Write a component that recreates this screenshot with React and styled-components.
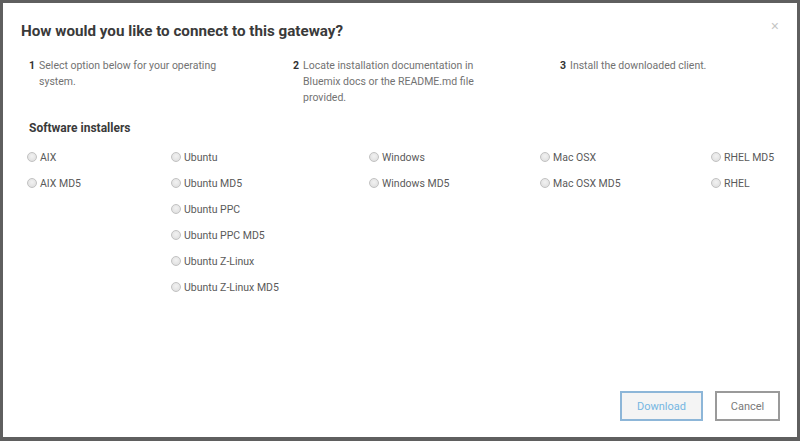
import styled, { createGlobalStyle } from 'styled-components';

const GlobalStyle = createGlobalStyle`
  html, body {
    margin: 0;
    padding: 0;
    height: 100%;
  }
  body {
    font-family: Roboto, "Liberation Sans", sans-serif;
    background: #5f5f5f;
  }
  #root {
    height: 100%;
  }
`;

const Backdrop = styled.div`
  box-sizing: border-box;
  height: 441px;
  padding: 3px 3px 4px 3px;
`;

const Dialog = styled.div`
  box-sizing: border-box;
  height: 100%;
  background: #fff;
  display: flex;
  flex-direction: column;
  padding: 18px 17px 16px 18px;
`;

const Header = styled.div`
  display: flex;
  justify-content: space-between;
  align-items: flex-start;
`;

const Title = styled.h2`
  margin: 0;
  font-size: 15.2px;
  font-weight: 700;
  color: #3a3a3a;
  line-height: 20px;
`;

const Close = styled.button`
  border: 0;
  background: none;
  padding: 0 1px 0 0;
  color: #c4c4c4;
  font-size: 14px;
  line-height: 10px;
  cursor: pointer;
`;

const Steps = styled.ol`
  list-style: none;
  margin: 17px 0 0;
  padding: 0 0 0 8px;
  display: grid;
  grid-template-columns: 264px 267px 1fr;
`;

const Step = styled.li`
  display: flex;
  gap: 4px;
  max-width: 200px;
  font-size: 10.5px;
  line-height: 16px;
  color: #727272;

  b {
    color: #333;
    font-weight: 700;
  }
`;

const Section = styled.h3`
  margin: 14px 0 0 8px;
  font-size: 12px;
  font-weight: 700;
  color: #3a3a3a;
  line-height: 16px;
`;

const Options = styled.div`
  margin: 8px 0 0 6px;
  display: grid;
  grid-template-columns: 144px 198px 171px 171px 1fr;
`;

const Column = styled.div`
  display: flex;
  flex-direction: column;
`;

const Option = styled.label`
  display: flex;
  align-items: center;
  gap: 3px;
  height: 26px;
  font-size: 10.5px;
  color: #5a5a5a;
  cursor: pointer;
`;

const Radio = styled.span`
  box-sizing: border-box;
  width: 10px;
  height: 10px;
  border-radius: 50%;
  border: 1px solid #c2c2c2;
  background: radial-gradient(circle at 50% 40%, #f2f2f2 0%, #e2e2e2 70%, #d4d4d4 100%);
  flex-shrink: 0;
`;

const Footer = styled.div`
  margin-top: auto;
  display: flex;
  justify-content: flex-end;
  gap: 12px;
`;

const Button = styled.button`
  box-sizing: border-box;
  height: 30px;
  padding: 0 ${(p) => (p.$primary ? '15px' : '13px')};
  min-width: ${(p) => (p.$primary ? '81px' : '65px')};
  border: 2px solid ${(p) => (p.$primary ? '#8db6d8' : '#9a9a9a')};
  background: ${(p) => (p.$primary ? '#f4f4f4' : '#fff')};
  color: ${(p) => (p.$primary ? '#74b6e2' : '#7a7a7a')};
  font-family: Roboto, "Liberation Sans", sans-serif;
  font-size: 11px;
  cursor: pointer;
`;

const columns = [
  ['AIX', 'AIX MD5'],
  ['Ubuntu', 'Ubuntu MD5', 'Ubuntu PPC', 'Ubuntu PPC MD5', 'Ubuntu Z-Linux', 'Ubuntu Z-Linux MD5'],
  ['Windows', 'Windows MD5'],
  ['Mac OSX', 'Mac OSX MD5'],
  ['RHEL MD5', 'RHEL'],
];

const steps = [
  'Select option below for your operating system.',
  'Locate installation documentation in Bluemix docs or the README.md file provided.',
  'Install the downloaded client.',
];

export default function App() {
  return (
    <>
      <GlobalStyle />
      <Backdrop>
        <Dialog>
          <Header>
            <Title>How would you like to connect to this gateway?</Title>
            <Close aria-label="Close">×</Close>
          </Header>
          <Steps>
            {steps.map((s, i) => (
              <Step key={i}>
                <b>{i + 1}</b>
                <span>{s}</span>
              </Step>
            ))}
          </Steps>
          <Section>Software installers</Section>
          <Options>
            {columns.map((col, i) => (
              <Column key={i}>
                {col.map((name) => (
                  <Option key={name}>
                    <Radio />
                    {name}
                  </Option>
                ))}
              </Column>
            ))}
          </Options>
          <Footer>
            <Button $primary>Download</Button>
            <Button>Cancel</Button>
          </Footer>
        </Dialog>
      </Backdrop>
    </>
  );
}
